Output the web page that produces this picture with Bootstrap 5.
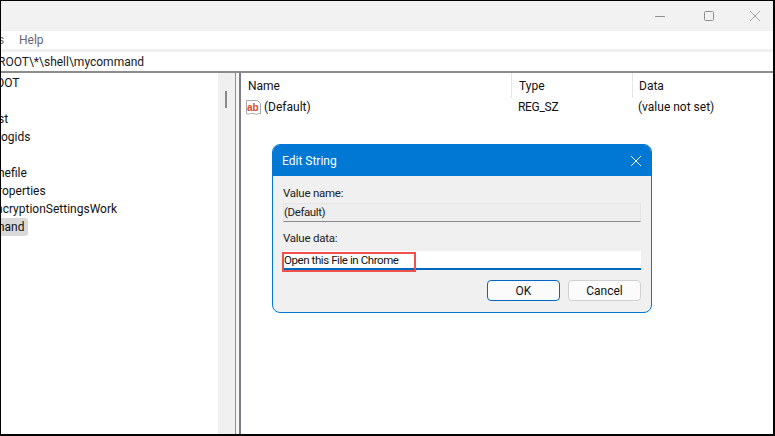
<!DOCTYPE html>
<html lang="en">
<head>
<meta charset="utf-8">
<title>Registry Editor</title>
<link href="https://cdn.jsdelivr.net/npm/bootstrap@5.3.0/dist/css/bootstrap.min.css" rel="stylesheet">
<style>
html,body{height:100%;margin:0;background:#fff}
body{font-family:Roboto,"Open Sans",sans-serif;font-size:12px;line-height:18px;color:#111;overflow:hidden}
.reg-window{width:775px;height:436px;border:solid #000;border-width:1px 2px 2px 1px;position:relative;overflow:hidden}
.reg-title{height:30px;background:#f2f2f2;flex:none}
.reg-ctl{height:30px}
.reg-ctl-a{width:42px}
.reg-ctl-b{width:56px}
.reg-ctl-c{width:36px}
.reg-menu{height:18px;background:#fff;flex:none;color:#6b6572;font-size:12px;padding-left:18px}
.reg-menu-s{width:18px;margin-left:-18px;overflow:hidden;text-indent:-3px}
.reg-sep{height:3px;background:#f0f0f0;flex:none}
.reg-addr{height:19px;background:#fff;flex:none;line-height:20px;white-space:nowrap;overflow:hidden;font-size:12px;color:#1a1a1a}
.reg-addr span{margin-left:-3px}
.reg-rule{height:2px;background:#8c8c8c;flex:none}
.reg-panes{flex:1;min-height:0}
.reg-tree{width:217px;padding-top:1px;flex:none;overflow:hidden;white-space:nowrap}
.reg-row{height:18px}
.reg-pull{margin-left:-3px}
.reg-pull-more{margin-left:-5px}
.reg-sel{display:inline-block;background:#d9d9d9;border-radius:0 3px 3px 0;padding-right:4px;height:18px;margin-left:-7px}
.reg-vbar{width:17px;background:#f0f0f0;flex:none;padding-top:18px}
.reg-thumb{width:2px;height:17px;background:#8a8a8a;margin-left:7px}
.reg-split{width:6px;flex:none;border-left:1px solid #8e8e96;border-right:2px solid #7d7d88;background:#f6f6f6}
.reg-list{flex:1;min-width:0;padding-left:7px}
.reg-head{height:25px;align-items:center}
.reg-head>div,.reg-line>div{flex:none}
.col-n{width:263px}
.col-t{width:121px;padding-left:7px}
.col-d{padding-left:6px}
.reg-head .col-t,.reg-head .col-d{border-left:1px solid #e5e5e5;height:25px;line-height:27px}
.reg-head .col-n{line-height:27px;height:25px}
.reg-line{height:18px}
.reg-line .col-t{letter-spacing:-.3px}
.reg-ab{width:17px;height:17px;flex:none;margin:0 2px 0 -3px}
.reg-dlg{position:absolute;left:271px;top:143px;width:380px;height:169px;background:#f0f0f0;border:1px solid #0078d4;border-radius:8px;overflow:hidden}
.reg-dlg-t{height:31px;background:#0078d4;color:#fff;font-size:12px;padding:0 9px;flex:none}
.reg-dlg-b{padding:8px 10px 0 10px}
.reg-lab{height:18px;color:#222;font-size:11.5px;letter-spacing:-.25px}
.reg-ro{height:19px;margin:1px 0 7px;background:#eeeeee;border:1px solid #e4e4e4;border-bottom:1px solid #8a8a8a;padding:0;font-size:11.5px;letter-spacing:-.4px;line-height:16px;color:#222}
.reg-in{height:19px;margin:4px 0 0;background:#fff;border-bottom:2px solid #0067c0;padding:0 1px;font-size:11.5px;letter-spacing:-.42px;line-height:18px;color:#111}
.reg-btns{margin-top:10px;gap:8px}
.reg-btn{width:73px;height:21px;padding:0;font-size:12px;line-height:18px;border-radius:4px;color:#111;background:#fbfbfb;border:1px solid #d0d0d0}
.reg-btn-ok{border:1px solid #0067c0}
.reg-mark{position:absolute;left:281px;top:251px;width:134px;height:20px;border:2px solid #f0514a;pointer-events:none}
</style>
</head>
<body>
<div class="reg-window d-flex flex-column">
  <div class="reg-title d-flex justify-content-end align-items-center">
    <div class="reg-ctl reg-ctl-a d-flex align-items-center justify-content-center"><svg width="12" height="12" viewBox="0 0 12 12"><path d="M1 6.5h10" stroke="#8f8f8f" fill="none"/></svg></div>
    <div class="reg-ctl reg-ctl-b d-flex align-items-center justify-content-center"><svg width="12" height="12" viewBox="0 0 12 12"><rect x="1.5" y="1.5" width="9" height="9" rx="1" stroke="#8f8f8f" fill="none"/></svg></div>
    <div class="reg-ctl reg-ctl-c d-flex align-items-center justify-content-center"><svg width="12" height="12" viewBox="0 0 12 12"><path d="M1 1l10 10M11 1L1 11" stroke="#a5a5a5" fill="none"/></svg></div>
  </div>
  <div class="reg-menu d-flex"><span class="reg-menu-s">s</span><span>Help</span></div>
  <div class="reg-sep"></div>
  <div class="reg-addr"><span>ROOT\*\shell\mycommand</span></div>
  <div class="reg-rule"></div>
  <div class="reg-panes d-flex">
    <div class="reg-tree">
      <div class="reg-row reg-pull-more">OOT</div>
      <div class="reg-row"></div>
      <div class="reg-row reg-pull">st</div>
      <div class="reg-row">ogids</div>
      <div class="reg-row"></div>
      <div class="reg-row reg-pull">hefile</div>
      <div class="reg-row reg-pull">roperties</div>
      <div class="reg-row reg-pull-more">ncryptionSettingsWork</div>
      <div class="reg-row"><span class="reg-sel">mand</span></div>
    </div>
    <div class="reg-vbar"><div class="reg-thumb"></div></div>
    <div class="reg-split"></div>
    <div class="reg-list">
      <div class="reg-head d-flex"><div class="col-n">Name</div><div class="col-t">Type</div><div class="col-d">Data</div></div>
      <div class="reg-line d-flex">
        <div class="col-n d-flex align-items-center">
          <svg class="reg-ab" viewBox="0 0 17 17"><path d="M1.5 1.5h11l3 3v10.5c-2-1.5-3 .8-5 .2s-3-1.4-5-.6-3 .2-4-.1z" fill="#fff" stroke="#a9a9a9"/><text x="2" y="11.5" font-family="Liberation Sans" font-weight="700" font-size="10" fill="#d9472b">ab</text></svg>
          <span>(Default)</span>
        </div>
        <div class="col-t">REG_SZ</div>
        <div class="col-d">(value not set)</div>
      </div>
    </div>
  </div>
  <div class="reg-dlg d-flex flex-column">
    <div class="reg-dlg-t d-flex justify-content-between align-items-center">
      <span>Edit String</span>
      <svg width="12" height="12" viewBox="0 0 12 12"><path d="M1 1l10 10M11 1L1 11" stroke="#fff" fill="none"/></svg>
    </div>
    <div class="reg-dlg-b">
      <div class="reg-lab">Value name:</div>
      <div class="reg-ro">(Default)</div>
      <div class="reg-lab">Value data:</div>
      <div class="reg-in">Open this File in Chrome</div>
      <div class="reg-btns d-flex justify-content-end">
        <button type="button" class="btn reg-btn reg-btn-ok">OK</button>
        <button type="button" class="btn reg-btn">Cancel</button>
      </div>
    </div>
  </div>
  <div class="reg-mark"></div>
</div>
</body>
</html>
